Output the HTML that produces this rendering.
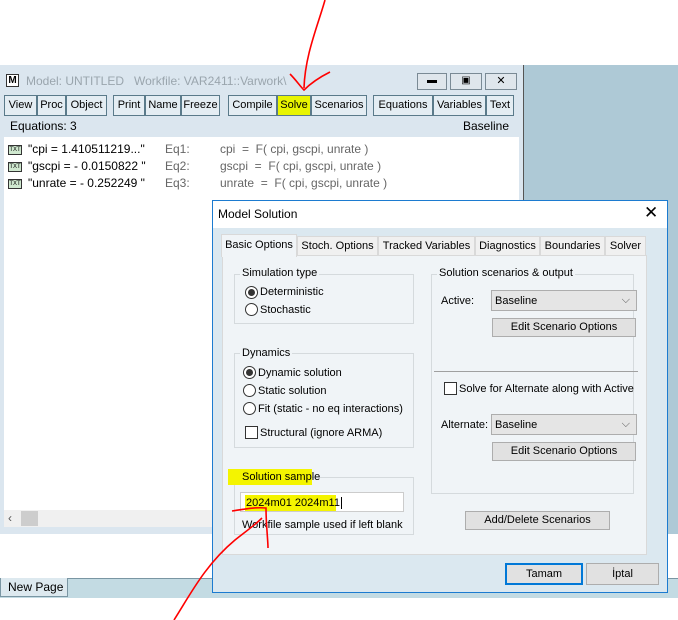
<!DOCTYPE html><html><head><style>
*{box-sizing:border-box;margin:0;padding:0;white-space:nowrap}
body{width:678px;height:620px;position:relative;background:#fff;font-family:"Liberation Sans",sans-serif;font-size:12px;overflow:hidden;color:#000}
.a{position:absolute}
.d{font-size:11px}
.tb{position:absolute;top:95px;height:21px;border:1px solid #5a7a8a;background:#e4edf3;font-size:11px;line-height:19px;text-align:center}
.btn{position:absolute;background:#e1e1e1;border:1px solid #adadad;text-align:center;font-size:11px}
.grp{position:absolute;border:1px solid #d5dadd}
.lg{position:absolute;background:#f0f4f7;padding:0 2px;font-size:11px}
.rad{position:absolute;width:13px;height:13px;border:1px solid #333;border-radius:50%;background:#fff}
.rad.on::after{content:"";position:absolute;left:2px;top:2px;width:7px;height:7px;border-radius:50%;background:#333}
.chk{position:absolute;width:13px;height:13px;border:1px solid #333;background:#fff}
.tab{position:absolute;top:236px;height:20px;border:1px solid #d9d9d9;background:#f0f0f0;font-size:11px;line-height:18px;text-align:center}
.txt{display:inline-block;width:14px;height:10px;border:1px solid #333;background:#cfe8cf;font-size:6px;line-height:8px;text-align:center;vertical-align:middle;margin-right:6px}
</style></head><body>
<div class="a" style="left:0;top:65px;width:678px;height:533px;background:#aec9d6"></div>
<div class="a" style="left:0;top:65px;width:524px;height:469px;background:#dbe6ef;border-right:1px solid #555"></div>
<div class="a" style="left:6px;top:74px;width:13px;height:13px;border:1px solid #333;font-size:10px;line-height:11px;text-align:center;font-weight:bold;background:#fff">M</div>
<div class="a" style="left:26px;top:74px;color:#9aa5ad;font-size:12px">Model: UNTITLED &nbsp; Workfile: VAR2411::Varwork\</div>
<div class="a" style="left:417px;top:73px;width:30px;height:17px;border:1px solid #7a8a95;background:#dfe6ec;text-align:center;font-size:10px;line-height:14px">▬</div>
<div class="a" style="left:450px;top:73px;width:32px;height:17px;border:1px solid #7a8a95;background:#dfe6ec;text-align:center;font-size:10px;line-height:14px">▣</div>
<div class="a" style="left:485px;top:73px;width:32px;height:17px;border:1px solid #7a8a95;background:#dfe6ec;text-align:center;font-size:11px;line-height:14px">✕</div>
<div class="tb" style="left:4px;width:33px">View</div>
<div class="tb" style="left:37px;width:29px">Proc</div>
<div class="tb" style="left:66px;width:41px">Object</div>
<div class="tb" style="left:113px;width:32px">Print</div>
<div class="tb" style="left:145px;width:36px">Name</div>
<div class="tb" style="left:181px;width:39px">Freeze</div>
<div class="tb" style="left:228px;width:49px">Compile</div>
<div class="tb" style="left:277px;width:34px;background:#e8f400">Solve</div>
<div class="tb" style="left:311px;width:56px">Scenarios</div>
<div class="tb" style="left:373px;width:60px">Equations</div>
<div class="tb" style="left:433px;width:53px">Variables</div>
<div class="tb" style="left:486px;width:28px">Text</div>
<div class="a" style="left:10px;top:119px;font-size:12px">Equations: 3</div>
<div class="a" style="left:463px;top:119px;font-size:12px">Baseline</div>
<div class="a" style="left:4px;top:137px;width:515px;height:373px;background:#fff"></div>
<div class="a" style="left:4px;top:510px;width:515px;height:17px;background:#f0f0f0"></div>
<div class="a" style="left:8px;top:511px;font-size:12px;color:#555">‹</div>
<div class="a" style="left:21px;top:511px;width:17px;height:15px;background:#cdcdcd"></div>
<div class="a" style="left:8px;top:141px;line-height:17px;font-size:12px">
<div><span class="txt">TXT</span>"cpi = 1.410511219..." <span style="color:#666;position:absolute;left:157px">Eq1:</span><span style="color:#666;position:absolute;left:212px">cpi &nbsp;= &nbsp;F( cpi, gscpi, unrate )</span></div>
<div><span class="txt">TXT</span>"gscpi = - 0.0150822 " <span style="color:#666;position:absolute;left:157px">Eq2:</span><span style="color:#666;position:absolute;left:212px">gscpi &nbsp;= &nbsp;F( cpi, gscpi, unrate )</span></div>
<div><span class="txt">TXT</span>"unrate = - 0.252249 " <span style="color:#666;position:absolute;left:157px">Eq3:</span><span style="color:#666;position:absolute;left:212px">unrate &nbsp;= &nbsp;F( cpi, gscpi, unrate )</span></div>
</div>
<div class="a" style="left:0;top:534px;width:678px;height:44px;background:#fff"></div>
<div class="a" style="left:0;top:578px;width:678px;height:20px;background:#c3dbe3;border-top:1px solid #7a96a3"></div>
<div class="a" style="left:0;top:578px;width:68px;height:19px;background:#dde9ef;border:1px solid #7a96a3;border-top:none;font-size:12px;line-height:18px;padding-left:7px">New Page</div>
<div class="a" style="left:0;top:598px;width:678px;height:22px;background:#fff"></div>
<div class="d">
<div class="a" style="left:212px;top:200px;width:456px;height:393px;background:#dbe8f0;border:1px solid #1c7bd0"></div>
<div class="a" style="left:213px;top:201px;width:454px;height:27px;background:#fff"></div>
<div class="a" style="left:218px;top:207px;font-size:12px">Model Solution</div>
<div class="a" style="left:644px;top:203px;font-size:17px;font-weight:300">✕</div>
<div class="a" style="left:222px;top:255px;width:425px;height:300px;background:#f0f4f7;border:1px solid #d9d9d9"></div>
<div class="tab" style="left:297px;width:81px">Stoch. Options</div>
<div class="tab" style="left:378px;width:97px">Tracked Variables</div>
<div class="tab" style="left:475px;width:65px">Diagnostics</div>
<div class="tab" style="left:540px;width:65px">Boundaries</div>
<div class="tab" style="left:605px;width:41px">Solver</div>
<div class="tab" style="left:221px;top:234px;width:76px;height:23px;background:#f0f4f7;border-bottom:none;line-height:20px">Basic Options</div>
<div class="grp" style="left:234px;top:274px;width:180px;height:50px"></div>
<div class="lg" style="left:240px;top:267px">Simulation type</div>
<div class="rad on" style="left:245px;top:286px"></div><div class="a" style="left:260px;top:286px">Deterministic</div>
<div class="rad" style="left:245px;top:303px"></div><div class="a" style="left:260px;top:304px">Stochastic</div>
<div class="grp" style="left:234px;top:353px;width:180px;height:95px"></div>
<div class="lg" style="left:240px;top:347px">Dynamics</div>
<div class="rad on" style="left:243px;top:366px"></div><div class="a" style="left:258px;top:367px">Dynamic solution</div>
<div class="rad" style="left:243px;top:384px"></div><div class="a" style="left:258px;top:385px">Static solution</div>
<div class="rad" style="left:243px;top:402px"></div><div class="a" style="left:258px;top:403px">Fit (static - no eq interactions)</div>
<div class="chk" style="left:245px;top:426px"></div><div class="a" style="left:260px;top:427px">Structural (ignore ARMA)</div>
<div class="grp" style="left:234px;top:477px;width:180px;height:58px"></div>
<div class="a" style="left:228px;top:469px;width:84px;height:16px;background:#f4f400"></div>
<div class="a" style="left:242px;top:471px">Solution sample</div>
<div class="a" style="left:240px;top:492px;width:164px;height:20px;background:#fff;border:1px solid #ccc"></div>
<div class="a" style="left:245px;top:495px;width:91px;height:16px;background:#f4f400"></div>
<div class="a" style="left:246px;top:497px">2024m01 2024m11<span style="border-left:1px solid #000;margin-left:1px"></span></div>
<div class="a" style="left:242px;top:519px">Workfile sample used if left blank</div>
<div class="grp" style="left:431px;top:274px;width:203px;height:220px"></div>
<div class="lg" style="left:437px;top:267px">Solution scenarios &amp; output</div>
<div class="a" style="left:441px;top:295px">Active:</div>
<div class="a" style="left:491px;top:290px;width:146px;height:21px;background:#e5e5e5;border:1px solid #adadad;padding:4px 3px">Baseline<span style="position:absolute;right:6px;top:3px;color:#555">⌵</span></div>
<div class="btn" style="left:492px;top:318px;width:144px;height:19px;line-height:17px">Edit Scenario Options</div>
<div class="a" style="left:434px;top:371px;width:204px;height:1px;background:#a0a0a0"></div>
<div class="chk" style="left:444px;top:382px"></div><div class="a" style="left:459px;top:383px">Solve for Alternate along with Active</div>
<div class="a" style="left:441px;top:419px">Alternate:</div>
<div class="a" style="left:491px;top:414px;width:146px;height:21px;background:#e5e5e5;border:1px solid #adadad;padding:4px 3px">Baseline<span style="position:absolute;right:6px;top:3px;color:#555">⌵</span></div>
<div class="btn" style="left:492px;top:442px;width:144px;height:19px;line-height:17px">Edit Scenario Options</div>
<div class="btn" style="left:465px;top:511px;width:145px;height:19px;line-height:17px">Add/Delete Scenarios</div>
<div class="btn" style="left:505px;top:563px;width:78px;height:22px;line-height:18px;border:2px solid #0078d7">Tamam</div>
<div class="btn" style="left:586px;top:563px;width:73px;height:22px;line-height:20px">İptal</div>
</div>
<svg class="a" style="left:0;top:0" width="678" height="620">
<g fill="none" stroke="#f00" stroke-width="1.6">
<path d="M325 0 C318 25 305 55 304 88"/>
<path d="M290 74 C296 80 300 86 304 90 C310 84 318 78 330 72"/>
<path d="M174 620 C190 595 205 565 235 540 C245 532 255 525 262 518"/>
<path d="M232 511 C245 509 255 507 266 508 C266 525 268 540 268 548"/>
</g></svg>
</body></html>
